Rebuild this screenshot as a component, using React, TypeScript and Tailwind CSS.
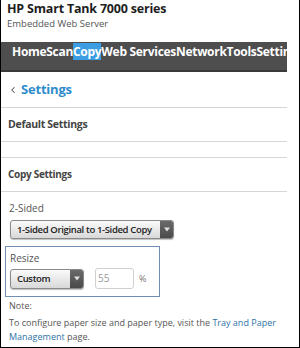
import { ChevronLeft } from "lucide-react";

function Select({ label, width }: { label: string; width: string }) {
  return (
    <div
      className={`flex ${width} items-stretch overflow-hidden rounded-[3px] border border-[#8a8a8a] bg-gradient-to-b from-[#fafafa] to-[#d9d9d9] shadow-[0_1px_1px_rgba(0,0,0,0.25)]`}
    >
      <span className="flex-1 whitespace-nowrap pl-[6px] text-[9.5px] font-semibold leading-[17px] tracking-[-0.35px] text-[#222]">{label}</span>
      <span className="flex w-[13px] items-center justify-center bg-gradient-to-b from-[#6a6a6a] to-[#4a4a4a]">
        <svg width="6" height="5" viewBox="0 0 6 5">
          <path d="M0 0.5h6L3 4.5z" fill="#e0e0e0" />
        </svg>
      </span>
    </div>
  );
}

export default function App() {
  return (
    <div className="h-[348px] w-[300px] overflow-hidden border-x border-b border-black bg-white font-['Open_Sans',sans-serif]">
      <div className="w-[286px]">
        {/* Header */}
        <div className="px-[6px] pt-[1px]">
          <h1 className="text-[12.5px] font-bold leading-[16px] tracking-[-0.2px] text-[#1e1e1e]">HP Smart Tank 7000 series</h1>
          <p className="text-[9.5px] leading-[14px] text-[#555]">Embedded Web Server</p>
        </div>

        {/* Nav */}
        <nav className="mt-[11px] h-[30px] overflow-hidden whitespace-nowrap border-b-2 border-[#3a3a3a] bg-[#4e4e4e] pl-[11px] pt-[2px] text-[12px] font-bold leading-[15px] tracking-[-0.3px] text-white">
          <span>Home</span>
          <span>Scan</span>
          <span className="bg-[#3c9ee2]">Copy</span>
          <span>Web Services</span>
          <span>Network</span>
          <span>Tools</span>
          <span>Settings</span>
        </nav>

        {/* Back */}
        <div className="flex h-[36px] items-center gap-[3px] border-b border-[#d6d6d6] pl-[7px]">
          <ChevronLeft size={10} strokeWidth={2.5} className="text-[#555]" />
          <span className="text-[13px] font-bold tracking-[-0.2px] text-[#2f8ccc]">Settings</span>
        </div>

        <div className="flex h-[34px] items-center border-b border-[#d6d6d6] pl-[7px] text-[10.5px] font-bold tracking-[-0.3px] text-[#444]">
          Default Settings
        </div>
        <div className="h-[16px] border-b border-[#d6d6d6]" />
        <div className="flex h-[34px] items-center border-b border-[#d6d6d6] pl-[7px] text-[10px] font-bold tracking-[-0.3px] text-[#444]">
          Copy Settings
        </div>

        {/* Form */}
        <div className="px-[4px] pt-[10px]">
          <p className="pl-[4px] text-[10px] leading-[13px] text-[#555]">2-Sided</p>
          <div className="mt-[5px] h-[19px] pl-[5px]">
            <Select label="1-Sided Original to 1-Sided Copy" width="h-[19px] w-[164px]" />
          </div>

          <div className="mt-[7px] h-[51px] w-[155px] border border-[#6f8fb5] pl-[4px] pt-[5px]">
            <p className="text-[10px] leading-[13px] text-[#555]">Resize</p>
            <div className="mt-[3px] flex items-center">
              <Select label="Custom" width="h-[20px] w-[74px]" />
              <div className="ml-[11px] h-[21px] w-[39px] rounded-[3px] border border-[#cfcfcf] pl-[2px] text-[10px] leading-[19px] text-[#9a9a9a]">
                55
              </div>
              <span className="ml-[5px] text-[9px] text-[#777]">%</span>
            </div>
          </div>

          <p className="mt-[2px] pl-[4px] text-[9px] leading-[14px] text-[#555]">Note:</p>
          <p className="mt-[3px] pl-[4px] text-[9px] leading-[14px] text-[#555]">
            To configure paper size and paper type, visit the{" "}
            <span className="text-[#2d73a8]">Tray and Paper Management</span> page.
          </p>
        </div>
      </div>
    </div>
  );
}
